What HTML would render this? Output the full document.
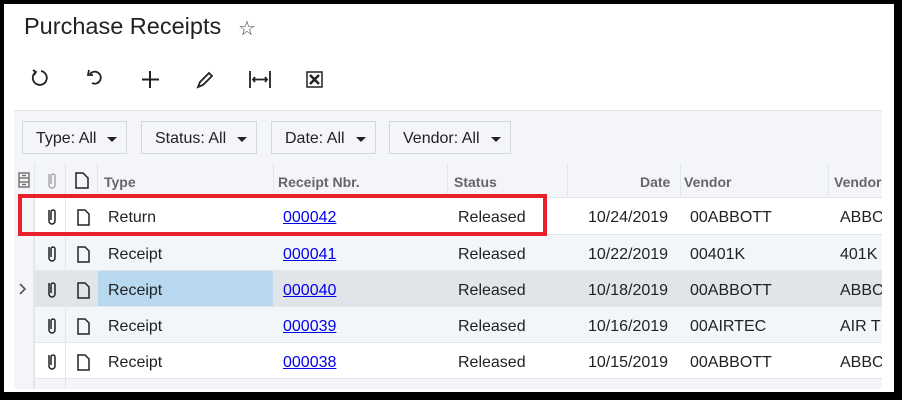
<!DOCTYPE html><html><head><style>
*{margin:0;padding:0;box-sizing:border-box}
body{width:902px;height:400px;background:#000;font-family:"Liberation Sans",sans-serif;position:relative;overflow:hidden}
.pg{position:absolute;left:4px;top:4px;width:890px;height:388px;background:#fff}
.ab{position:absolute}
h1{position:absolute;left:24px;top:13px;font-size:23.5px;font-weight:normal;color:#222}
.fb{position:absolute;left:14px;top:110px;width:868px;height:53px;background:#f3f5f8;border-top:1px solid #dfe2e6}
.btn{position:absolute;top:10px;height:33px;border:1px solid #d4d7db;background:#f3f5f8;font-size:16px;color:#222;padding:8px 0 0 13px}
.btn i{position:absolute;right:9px;top:15px;border:5px solid transparent;border-top:5px solid #222;border-bottom:0}
.row{position:absolute;left:14px;width:868px;font-size:16px;color:#222;border-bottom:1px solid #e3e6ea;overflow:hidden}
.row span{position:absolute;top:11px}
.hd{color:#666;font-weight:bold;font-size:14px;background:#f3f5f8}
.vl{position:absolute;top:0;bottom:0;border-left:1px solid #e3e6ea}
a{color:#0000ee;text-decoration:underline}
</style></head><body><div class="pg"></div>
<h1>Purchase Receipts</h1>
<div class="ab" style="left:238px;top:16px;font-size:20px;color:#444">☆</div>
<svg class="ab" style="left:28px;top:66px" width="320" height="26" fill="none" stroke="#222" stroke-width="1.8">
<path d="M8 6 A7 7 0 1 0 13 5"/><path d="M5 4 L8 6 L6 9"/>
<path d="M62 8 A6 6 0 1 1 64 17"/><path d="M61 4 L60 9 L65 9"/>
<path d="M122 5 V22 M114 13.5 H131" stroke-width="2"/>
<path d="M170 21 L172 16 L181 7 L184 10 L175 19 Z"/>
<path d="M222 5 V22 M242 5 V22 M225 13.5 H239 M227 11 L225 13.5 L227 16 M237 11 L239 13.5 L237 16"/>
<rect x="279" y="6" width="15" height="15" stroke-width="1.5"/><path d="M282 9 L291 18 M291 9 L282 18" stroke-width="2.5"/>
</svg>
<div class="fb">
<div class="btn" style="left:8px;width:105px">Type: All<i></i></div>
<div class="btn" style="left:127px;width:116px">Status: All<i></i></div>
<div class="btn" style="left:257px;width:105px">Date: All<i></i></div>
<div class="btn" style="left:375px;width:122px">Vendor: All<i></i></div>
</div>
<div class="ab" style="left:14px;top:163px;width:868px;height:226px;background:#f3f5f8"></div>
<div class="row hd" style="top:163px;height:35px"><span style="left:90px">Type</span><span style="left:264px">Receipt Nbr.</span><span style="left:440px">Status</span><span style="left:626px">Date</span><span style="left:670px">Vendor</span><span style="left:820px">Vendor</span></div>
<div class="row" style="top:198px;height:37px;background:#fff"><span style="left:94px">Return</span><span style="left:269px"><a>000042</a></span><span style="left:444px">Released</span><span style="left:574px">10/24/2019</span><span style="left:676px">00ABBOTT</span><span style="left:826px">ABBC</span></div>
<div class="row" style="top:235px;height:36px;background:#f3f6f9"><span style="left:94px">Receipt</span><span style="left:269px"><a>000041</a></span><span style="left:444px">Released</span><span style="left:574px">10/22/2019</span><span style="left:676px">00401K</span><span style="left:826px">401K</span></div>
<div class="row" style="top:271px;height:36px;background:#e1e4e8"><div class="ab" style="left:84px;top:0;width:175px;height:36px;background:#b8d8ef"></div><span style="left:94px">Receipt</span><span style="left:269px"><a>000040</a></span><span style="left:444px">Released</span><span style="left:574px">10/18/2019</span><span style="left:676px">00ABBOTT</span><span style="left:826px">ABBC</span></div>
<div class="row" style="top:307px;height:36px;background:#f3f6f9"><span style="left:94px">Receipt</span><span style="left:269px"><a>000039</a></span><span style="left:444px">Released</span><span style="left:574px">10/16/2019</span><span style="left:676px">00AIRTEC</span><span style="left:826px">AIR T</span></div>
<div class="row" style="top:343px;height:36px;background:#fff"><span style="left:94px">Receipt</span><span style="left:269px"><a>000038</a></span><span style="left:444px">Released</span><span style="left:574px">10/15/2019</span><span style="left:676px">00ABBOTT</span><span style="left:826px">ABBC</span></div>
<div class="ab" style="left:14px;top:198px;width:20px;height:191px;background:#f3f5f8;border-right:1px solid #e3e6ea"></div>
<svg class="ab" style="left:17px;top:282px" width="12" height="14" fill="none" stroke="#555" stroke-width="1.6"><path d="M3 2 L8 7 L3 12"/></svg>
<div class="ab" style="left:14px;top:163px;width:868px;height:226px">
<div class="vl" style="left:20px"></div><div class="vl" style="left:51px"></div><div class="vl" style="left:83px;bottom:191px"></div><div class="vl" style="left:259px;bottom:191px"></div><div class="vl" style="left:433px;bottom:191px"></div><div class="vl" style="left:553px;bottom:191px"></div><div class="vl" style="left:666px;bottom:191px"></div><div class="vl" style="left:814px;bottom:191px"></div></div>
<svg class="ab" style="left:14px;top:163px" width="80" height="35" fill="none" stroke-width="1.5">
<rect x="5" y="10" width="10" height="14" stroke="#777"/><path d="M5 15 H15 M5 19 H15 M8 12.5 H12 M8 21.5 H12" stroke="#777"/>
<path d="M35 11 V22 A3 3 0 0 0 41 22 V13 A2 2 0 0 0 37 13 V21" stroke="#aaa"/>
<path d="M62 10 H69 L74 15 V25 H62 Z" stroke="#222"/>
</svg>
<svg class="ab" style="left:40px;top:198px" width="60" height="181" fill="none" stroke="#222" stroke-width="1.5">
<g id="r"><path d="M9 12 V23 A3 3 0 0 0 15 23 V14 A2 2 0 0 0 11 14 V22"/><path d="M38 12 H45 L49 16 V27 H38 Z"/></g>
<use href="#r" y="37"/><use href="#r" y="73"/><use href="#r" y="109"/><use href="#r" y="145"/>
</svg>
<div class="ab" style="left:18px;top:194px;width:529px;height:42px;border:4px solid #e8202a"></div>
</body></html>
